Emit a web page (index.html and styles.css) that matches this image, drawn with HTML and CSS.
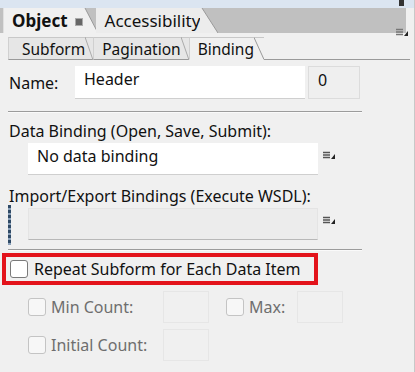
FILE: index.html
```html
<!DOCTYPE html>
<html>
<head>
  <title>Object - Binding</title>
  <meta name="viewport" content="width=device-width, initial-scale=1.0" />
  <link rel="stylesheet" href="styles.css">
</head>
<body>
  <div class="topbar">
    <span class="pin"></span>
  </div>

  <div class="tabs">
    <div class="tab active">
      <span class="tab-label"><b>Object</b><span class="close"></span></span>
      <svg class="slant" width="15" height="25" viewBox="0 0 15 25"><path d="M0 0 L2 0 L15 25 L0 25 Z" fill="#f0f0f0"/><path d="M2 0 L15 25" stroke="#9a9a9a" fill="none"/></svg>
    </div>
    <div class="tab">
      <span class="tab-label">Accessibility</span>
      <svg class="slant" width="18" height="25" viewBox="0 0 18 25"><path d="M0 0 L2 0 L18 25 L0 25 Z" fill="#ececec"/><path d="M2 0 L18 25" stroke="#9a9a9a" fill="none"/></svg>
    </div>
    <div class="tab-fill">
      <svg class="menu" width="12" height="8" viewBox="0 0 12 8"><path d="M0 1.5h7M0 4h7M0 6.5h7" stroke="#777" stroke-width="1.4"/><path d="M12 3 L12 8 L8 8 Z" fill="#222"/></svg>
    </div>
  </div>

  <div class="subtabs">
    <div class="subtab">Subform<svg class="slant" width="8" height="23" viewBox="0 0 8 23"><path d="M0 0 L8 23" stroke="#aaa" fill="none"/></svg></div>
    <div class="subtab">Pagination<svg class="slant" width="8" height="23" viewBox="0 0 8 23"><path d="M0 0 L8 23" stroke="#aaa" fill="none"/></svg></div>
    <div class="subtab active">Binding<svg class="slant" width="10" height="23" viewBox="0 0 10 23"><path d="M0 0.5 L10 22.5" stroke="#999" fill="none"/></svg></div>
    <div class="subtab-fill"></div>
  </div>

  <div class="panel">
    <div class="name-row">
      <span class="name-label">Name:</span>
      <div class="field name-field">Header</div>
      <div class="field count-field">0</div>
    </div>
    <div class="sep"></div>

    <div class="label">Data Binding (Open, Save, Submit):</div>
    <div class="bind-row">
      <div class="field bind-field">No data binding</div>
      <svg class="menu" width="12" height="8" viewBox="0 0 12 8"><path d="M0 1.5h7M0 4h7M0 6.5h7" stroke="#555" stroke-width="1.4"/><path d="M12 3 L12 8 L8 8 Z" fill="#222"/></svg>
    </div>

    <div class="label wsdl-label">Import/Export Bindings (Execute WSDL):</div>
    <div class="bind-row">
      <span class="grip"></span>
      <div class="field bind-field disabled"></div>
      <svg class="menu" width="12" height="8" viewBox="0 0 12 8"><path d="M0 1.5h7M0 4h7M0 6.5h7" stroke="#555" stroke-width="1.4"/><path d="M12 3 L12 8 L8 8 Z" fill="#222"/></svg>
    </div>
    <div class="sep sep-bottom"></div>
  </div>

  <div class="repeat">
    <span class="check"></span>
    <span>Repeat Subform for Each Data Item</span>
  </div>

  <div class="counts">
    <div class="count-row">
      <span class="check dim"></span>
      <span class="count-label">Min Count:</span>
      <div class="count-box"></div>
      <span class="check dim max-check"></span>
      <span class="count-label max-label">Max:</span>
      <div class="count-box"></div>
    </div>
    <div class="count-row">
      <span class="check dim"></span>
      <span class="count-label">Initial Count:</span>
      <div class="count-box"></div>
    </div>
  </div>
</body>
</html>
```

FILE: styles.css
```css
body { margin: 0; background: #f0f0f0; font-family: "Noto Sans", "Open Sans", sans-serif; font-size: 16px; color: #111; height: 372px; overflow: hidden; border-right: 1px solid #c8c8c8; box-sizing: border-box; white-space: nowrap; }

.topbar { height: 8px; background: #dbe5f1; position: relative; }
.pin { position: absolute; right: 10px; top: 0; width: 5px; height: 6px; background: #333; }

.tabs { display: flex; height: 25px; background: #c0c0c0; padding-left: 3px; width: 406px; box-sizing: border-box; }
.tab { display: flex; align-items: stretch; }
.tab-label { background: #f0f0f0; padding: 0 0 0 8px; font-size: 17px; display: flex; align-items: center; gap: 7px; border-left: 1px solid #e0e0e0; }
.tab + .tab { margin-left: -2px; }
.tab + .tab .tab-label { padding-left: 9px; background: #ececec; border-left: none; }
.close { width: 6px; height: 6px; background: #666; border: 1px solid #aaa; display: inline-block; margin-top: 2px; }
.tab-fill { flex: 1; position: relative; }
.tab-fill .menu { position: absolute; right: -2px; bottom: -3px; }

.subtabs { display: flex; margin-top: 4px; padding-left: 8px; height: 23px; font-size: 15.5px; }
.subtab { background: #e6e6e6; border-top: 1px solid #c8c8c8; border-left: 1px solid #d0d0d0; padding: 0 0 0 13px; display: flex; align-items: center; border-bottom: 1px solid #9a9a9a; }
.subtab + .subtab { padding-left: 8px; }
.subtab.active { background: #f0f0f0; border-bottom-color: transparent; }
.subtab-fill { flex: 1; margin-right: 4px; border-bottom: 1px solid #9a9a9a; }

.panel { padding-left: 9px; }
.name-row { display: flex; align-items: center; margin-top: 6px; height: 33px; }
.name-label { width: 66px; }
.field { height: 33px; box-sizing: border-box; background: #fff; border-bottom: 1px solid #cfcfcf; padding: 2px 0 0 9px; }
.name-field { width: 230px; }
.count-field { width: 52px; margin-left: 3px; background: #efefef; border: 1px solid #dcdcdc; padding-left: 9px; }

.sep { width: 354px; height: 1px; background: #9c9c9c; border-bottom: 1px solid #fafafa; margin: 12px 0 0 -1px; }

.label { margin-top: 7px; height: 22px; line-height: 22px; }
.wsdl-label { margin-top: 10px; }
.bind-row { display: flex; align-items: flex-start; margin: 1px 0 0 19px; gap: 5px; position: relative; }
.bind-row .menu { margin-top: 8px; }
.bind-field { width: 290px; height: 32px; }
.bind-field.disabled { background: #ececec; border: 1px solid #e4e4e4; border-bottom-color: #b8b8b8; }
.grip { position: absolute; left: -20px; top: -3px; width: 3px; height: 40px; background: repeating-linear-gradient(#2f4a66 0 3px, #8aa0b8 3px 5px); }
.sep-bottom { margin-top: 9px; }

.repeat { margin: 2px 0 0 2px; width: 316px; height: 32px; box-sizing: border-box; border: 4px solid #e3131b; display: flex; align-items: center; gap: 6px; padding-left: 4px; font-size: 16px; }
.check { width: 18px; height: 18px; box-sizing: border-box; border: 1px solid #7a7a7a; border-radius: 3px; background: #fff; display: inline-block; flex: none; }
.check.dim { border-color: #c4c4c4; background: #f7f7f7; }

.counts { padding-left: 28px; }
.count-row { display: flex; align-items: center; height: 33px; margin-top: 5px; }
.count-label { color: #6e6e6e; margin-left: 5px; width: 112px; }
.count-box { width: 46px; height: 32px; border: 1px solid #e6e6e6; box-sizing: border-box; }
.max-check { margin-left: 17px; }
.max-label { width: 48px; }
```
